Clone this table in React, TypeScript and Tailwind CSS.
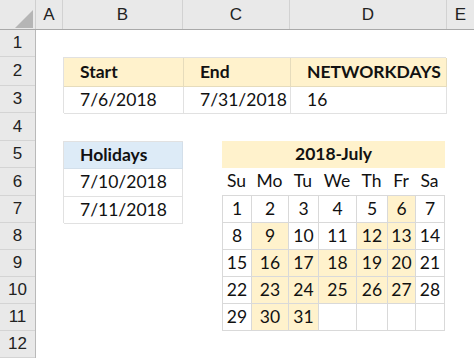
import React from "react";

const colHeads = [
  { label: "A", w: "w-[27px]" },
  { label: "B", w: "w-[120px]" },
  { label: "C", w: "w-[107px]" },
  { label: "D", w: "w-[157px]" },
];

const rowHeights = ["h-[27px]", "h-[29px]", "h-[27px]", "h-[28px]", "h-[27px]", "h-[28px]", "h-[27px]", "h-[27px]", "h-[27px]", "h-[27px]", "h-[27px]", "h-[27px]"];

const dayCols = ["w-[29px]", "w-[37px]", "w-[30px]", "w-[38px]", "w-[31px]", "w-[28px]", "w-[29px]"];
const weekdays = ["Su", "Mo", "Tu", "We", "Th", "Fr", "Sa"];

// working days between 7/6 and 7/31, holidays excluded
const workdays = new Set([6, 9, 12, 13, 16, 17, 18, 19, 20, 23, 24, 25, 26, 27, 30, 31]);

function buildWeeks() {
  const weeks: (number | null)[][] = [];
  let day = 1;
  for (let w = 0; w < 5; w++) {
    const row: (number | null)[] = [];
    for (let d = 0; d < 7; d++) {
      row.push(day <= 31 ? day : null);
      day++;
    }
    weeks.push(row);
  }
  return weeks;
}

function Calendar() {
  const weeks = buildWeeks();
  return (
    <div className="col-start-3 col-span-3 row-start-5 row-span-7 ml-[39px] w-[223px] flex flex-col">
      <div className="h-[27px] bg-[#fff2cc] flex items-center justify-center font-bold">2018-July</div>
      <div className="h-[28px] flex items-center">
        {weekdays.map((d, i) => (
          <div key={d} className={`${dayCols[i]} text-center`}>{d}</div>
        ))}
      </div>
      <div className="border-t border-l border-[#d9d9d9]">
        {weeks.map((week, wi) => (
          <div key={wi} className="flex h-[27px]">
            {week.map((day, di) => (
              <div
                key={di}
                className={`${dayCols[di]} border-r border-b border-[#d9d9d9] flex items-center justify-center ${day && workdays.has(day) ? "bg-[#fff2cc]" : "bg-white"}`}
              >
                {day ?? ""}
              </div>
            ))}
          </div>
        ))}
      </div>
    </div>
  );
}

export default function App() {
  return (
    <div className="w-[474px] h-[361px] overflow-hidden bg-white text-[#111] font-['Lato',sans-serif] text-[17.5px]">
      {/* column headers */}
      <div className="flex h-[30px] bg-[#e9e9e9] border-b border-[#a9a9a9] font-['Liberation_Sans',sans-serif] text-[17px] text-[#222]">
        <div className="w-[36px] border-r border-[#cfcfcf] flex items-end justify-end pr-[2px] pb-[1px]">
          <svg width="18" height="18" viewBox="0 0 18 18">
            <polygon points="18,0 18,18 0,18" fill="#b5b5b5" />
          </svg>
        </div>
        {colHeads.map((c) => (
          <div key={c.label} className={`${c.w} border-r border-[#d2d2d2] flex items-center justify-center`}>
            {c.label}
          </div>
        ))}
        <div className="flex-1 flex items-center justify-center">E</div>
      </div>

      <div className="flex">
        {/* row headers */}
        <div className="w-[36px] bg-[#e9e9e9] border-r border-[#b9b9b9] font-['Liberation_Sans',sans-serif] text-[17px] text-[#222]">
          {rowHeights.map((h, i) => (
            <div key={i} className={`${h} border-b border-[#d4d4d4] flex items-center justify-center`}>
              {i + 1}
            </div>
          ))}
        </div>

        {/* sheet cells */}
        <div className="flex-1 grid grid-cols-[27px_120px_107px_156px_1fr] grid-rows-[27px_29px_27px_28px_27px_28px_27px_27px_27px_27px_27px_27px]">
          <div className="col-start-2 col-span-3 row-start-2 row-span-2 border-t border-l border-[#e1e1e1] grid grid-cols-[120px_107px_156px] grid-rows-[29px_27px]">
            <div className="bg-[#fff2cc] border-r border-b border-[#e6dcbc] pl-[16px] flex items-center font-bold">Start</div>
            <div className="bg-[#fff2cc] border-r border-b border-[#e6dcbc] pl-[16px] flex items-center font-bold">End</div>
            <div className="bg-[#fff2cc] border-r border-b border-[#e6dcbc] pl-[16px] flex items-center font-bold">NETWORKDAYS</div>
            <div className="border-r border-b border-[#e1e1e1] pl-[16px] flex items-center">7/6/2018</div>
            <div className="border-r border-b border-[#e1e1e1] pl-[16px] flex items-center">7/31/2018</div>
            <div className="border-r border-b border-[#e1e1e1] pl-[16px] flex items-center">16</div>
          </div>

          <div className="col-start-2 row-start-5 row-span-3 border-t border-l border-[#e1e1e1] grid grid-rows-[27px_28px_27px]">
            <div className="bg-[#ddebf7] border-r border-b border-[#d3dfea] pl-[16px] flex items-center font-bold">Holidays</div>
            <div className="border-r border-b border-[#e1e1e1] pl-[16px] flex items-center">7/10/2018</div>
            <div className="border-r border-b border-[#e1e1e1] pl-[16px] flex items-center">7/11/2018</div>
          </div>

          <Calendar />
        </div>
      </div>
    </div>
  );
}
